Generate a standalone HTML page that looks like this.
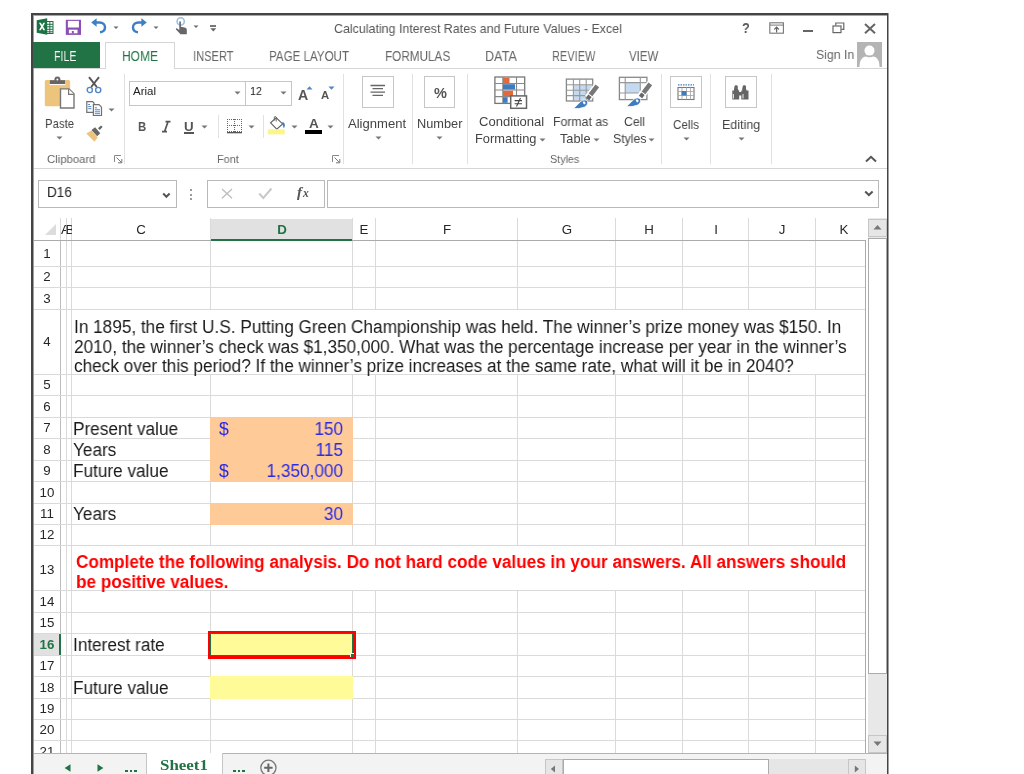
<!DOCTYPE html>
<html><head><meta charset="utf-8"><title>Excel</title>
<style>
html,body{margin:0;padding:0;width:1024px;height:774px;overflow:hidden;background:#fff;}
body{position:relative;font-family:"Liberation Sans", sans-serif;}
.t{position:absolute;white-space:nowrap;will-change:transform;}
.r{position:absolute;}
svg{position:absolute;overflow:visible;}
</style></head><body>
<div class="r" style="left:0px;top:0px;width:1024px;height:774px;background:#fff;"></div><div class="r" style="left:31px;top:13px;width:857px;height:761px;background:#fff;"></div><div class="r" style="left:31px;top:13px;width:857px;height:2px;background:#444;"></div><div class="r" style="left:31px;top:13px;width:2px;height:761px;background:#444;"></div><div class="r" style="left:887px;top:13px;width:1px;height:761px;background:#444;"></div><div class="r" style="left:888px;top:13px;width:1px;height:761px;background:#a0a0a0;"></div><div class="r" style="left:33px;top:15px;width:854px;height:1px;background:#a8a8a8;"></div><div class="r" style="left:33px;top:15px;width:1px;height:759px;background:#a0a0a0;"></div><svg style="left:36px;top:17px" width="18" height="19" viewBox="0 0 18 19">
<rect x="10.5" y="4.5" width="6.5" height="12" fill="#fff" stroke="#1e7145" stroke-width="1"/>
<path d="M11 7.3h6M11 9.8h6M11 12.3h6M11 14.8h6M13.8 5v12" stroke="#1e7145" stroke-width="1" fill="none"/>
<path d="M0.7 3.3 L11.2 1.2 L11.2 17.8 L0.7 15.8 Z" fill="#1e7145"/>
<path d="M3 5.8 L4.9 5.8 L6.1 8.1 L7.3 5.8 L9.1 5.8 L7.1 9.5 L9.2 13.3 L7.3 13.3 L6.1 10.9 L4.8 13.3 L3 13.3 L5.1 9.5 Z" fill="#fff"/>
</svg><svg style="left:65px;top:19px" width="17" height="17" viewBox="0 0 17 17">
<path d="M0.8 0.8 H16 V15.9 H0.8 Z" fill="#8c50b4"/>
<rect x="2.9" y="1.9" width="11" height="6.6" fill="#fff"/>
<rect x="3.9" y="10.7" width="8.6" height="3.6" fill="#fff"/>
<rect x="6.8" y="12" width="2" height="2.5" fill="#8c50b4"/>
</svg><svg style="left:90px;top:17px" width="18" height="17" viewBox="0 0 18 17">
<path d="M3 5.5 H9.5 C13 5.5 15 7.8 15 10.3 C15 13 13 15 10 15.3" stroke="#3e7fc1" stroke-width="2.4" fill="none"/>
<path d="M1.2 5.5 L6.6 1.2 L6.6 9.8 Z" fill="#3e7fc1"/>
</svg><svg style="left:112.8px;top:25.5px" width="6" height="4" viewBox="0 0 6 4"><path d="M0.5 0.5 L5.5 0.5 L3.0 3.0 Z" fill="#6a6a6a"/></svg><svg style="left:130px;top:17px" width="18" height="17" viewBox="0 0 18 17">
<path d="M15 5.5 H8.5 C5 5.5 3 7.8 3 10.3 C3 13 5 15 8 15.3" stroke="#3e7fc1" stroke-width="2.4" fill="none"/>
<path d="M16.8 5.5 L11.4 1.2 L11.4 9.8 Z" fill="#3e7fc1"/>
</svg><svg style="left:152.9px;top:25.5px" width="6" height="4" viewBox="0 0 6 4"><path d="M0.5 0.5 L5.5 0.5 L3.0 3.0 Z" fill="#6a6a6a"/></svg><svg style="left:174px;top:15px" width="16" height="21" viewBox="0 0 16 21">
<circle cx="6.7" cy="6.4" r="3.6" fill="none" stroke="#9cbfe3" stroke-width="1.6"/>
<path d="M5.3 7 C5.3 6.2 6.1 6.2 6.1 6.2 C6.9 6.2 6.9 7 6.9 7 V11.8 L10.5 12.5 C12 12.8 12.8 13.5 12.8 15 V19.3 H6.5 L2 14.4 C1.6 13.8 2.3 13 3 13.4 L5.3 15 Z" fill="#666"/>
</svg><svg style="left:193.4px;top:25.2px" width="6" height="4" viewBox="0 0 6 4"><path d="M0.5 0.5 L5.5 0.5 L3.0 3.0 Z" fill="#6a6a6a"/></svg><div class="r" style="left:210px;top:25px;width:6px;height:1.5px;background:#777;"></div><svg style="left:210px;top:28px" width="7" height="4" viewBox="0 0 7 4"><path d="M0.3 0.3 L6.3 0.3 L3.3 3.5 Z" fill="#666"/></svg><div class="t" style="left:333.8px;top:22.26px;font-size:13.4px;line-height:13.4px;color:#555;font-weight:normal;transform:scaleX(0.9280024746732658);transform-origin:left top;">Calculating Interest Rates and Future Values - Excel</div><div class="t" style="left:741.8px;top:21.03px;font-size:14.5px;line-height:14.5px;color:#555;font-weight:bold;transform:scaleX(0.8818541548897681);transform-origin:left top;">?</div><svg style="left:769px;top:22px" width="16" height="12" viewBox="0 0 16 12">
<rect x="0.8" y="0.8" width="13.6" height="10.4" fill="none" stroke="#777" stroke-width="1.1"/>
<path d="M1 3.1 H14.2" stroke="#777" stroke-width="1"/>
<path d="M7.6 10.5 V5.3 M5.3 7.5 L7.6 5.2 L9.9 7.5" stroke="#666" stroke-width="1.2" fill="none"/>
</svg><div class="r" style="left:803px;top:29.5px;width:10px;height:2px;background:#666;"></div><svg style="left:832px;top:22px" width="13" height="12" viewBox="0 0 13 12">
<rect x="1" y="4" width="8" height="6.6" fill="#fff" stroke="#666" stroke-width="1.2"/>
<path d="M3.8 3.5 V1 H11.8 V7.4 H9.5" fill="none" stroke="#666" stroke-width="1.2"/>
</svg><svg style="left:864px;top:23px" width="12" height="11" viewBox="0 0 12 11"><path d="M1 1 L11 10.3 M11 1 L1 10.3" stroke="#666" stroke-width="2"/></svg><div class="r" style="left:33px;top:42px;width:67px;height:26px;background:#217346;"></div><div class="t" style="left:54.3px;top:49.15px;font-size:14px;line-height:14px;color:#fff;font-weight:normal;transform:scaleX(0.7582938388625592);transform-origin:left top;">FILE</div><div class="r" style="left:34px;top:68px;width:853px;height:1px;background:#d5d5d5;"></div><div class="r" style="left:105px;top:42px;width:70px;height:27px;background:#fff;border:1px solid #d5d5d5;border-bottom:none;box-sizing:border-box;"></div><div class="t" style="left:121.8px;top:49.15px;font-size:14px;line-height:14px;color:#217346;font-weight:normal;transform:scaleX(0.8571428571428571);transform-origin:left top;">HOME</div><div class="t" style="left:192.5px;top:49.15px;font-size:14px;line-height:14px;color:#666;font-weight:normal;transform:scaleX(0.7925636007827789);transform-origin:left top;">INSERT</div><div class="t" style="left:268.75px;top:49.15px;font-size:14px;line-height:14px;color:#666;font-weight:normal;transform:scaleX(0.8269588587967749);transform-origin:left top;">PAGE LAYOUT</div><div class="t" style="left:384.8px;top:49.15px;font-size:14px;line-height:14px;color:#666;font-weight:normal;transform:scaleX(0.8383695512408385);transform-origin:left top;">FORMULAS</div><div class="t" style="left:485.0px;top:49.15px;font-size:14px;line-height:14px;color:#666;font-weight:normal;transform:scaleX(0.9013605442176871);transform-origin:left top;">DATA</div><div class="t" style="left:551.6px;top:49.15px;font-size:14px;line-height:14px;color:#666;font-weight:normal;transform:scaleX(0.7858048162230672);transform-origin:left top;">REVIEW</div><div class="t" style="left:628.9px;top:49.15px;font-size:14px;line-height:14px;color:#666;font-weight:normal;transform:scaleX(0.8191221694157115);transform-origin:left top;">VIEW</div><div class="t" style="left:815.5px;top:47.57px;font-size:13.5px;line-height:13.5px;color:#666;font-weight:normal;transform:scaleX(0.9107663040247309);transform-origin:left top;">Sign In</div><svg style="left:857px;top:42px" width="25" height="26" viewBox="0 0 25 26">
<rect x="0" y="0" width="25" height="25" fill="#b4b4b4"/>
<circle cx="12.5" cy="8.6" r="5" fill="#fff"/>
<path d="M2.5 25 C2.5 17.5 6 14.6 9 14.6 C10.5 15.6 14.5 15.6 16 14.6 C19 14.6 22.5 17.5 22.5 25 Z" fill="#fff"/>
</svg><div class="r" style="left:34px;top:168px;width:853px;height:1px;background:#d5d5d5;"></div><svg style="left:43px;top:75px" width="34" height="35" viewBox="0 0 34 35">
<rect x="1.8" y="4.9" width="25.3" height="26.3" rx="1.5" fill="#edc47b"/>
<rect x="6.9" y="5.2" width="15.1" height="3.8" fill="#666"/>
<circle cx="14.4" cy="4.5" r="3" fill="#666"/><circle cx="14.4" cy="4.6" r="1" fill="#fff"/>
<path d="M6.5 9.6 H22.5" stroke="#fff" stroke-width="1"/>
<path d="M17.5 13.9 H26 L31 18.9 V33 H17.5 Z" fill="#fff" stroke="#777" stroke-width="1.4"/>
<path d="M25.6 14 V19.3 H31" fill="#fff" stroke="#777" stroke-width="1.2"/>
</svg><div class="t" style="left:45.3px;top:116.70px;font-size:13px;line-height:13px;color:#444;font-weight:normal;transform:scaleX(0.8730995032364894);transform-origin:left top;">Paste</div><svg style="left:56.4px;top:136px" width="7" height="4" viewBox="0 0 7 4"><path d="M0.5 0.5 L6.5 0.5 L3.5 3.5 Z" fill="#777"/></svg><svg style="left:86px;top:76px" width="16" height="18" viewBox="0 0 16 18">
<path d="M3 1.2 L10.8 11 M13 1.2 L5.2 11" stroke="#555" stroke-width="1.9"/>
<circle cx="3.8" cy="14" r="2.6" fill="none" stroke="#4f86c6" stroke-width="1.4"/>
<circle cx="12.2" cy="14" r="2.6" fill="none" stroke="#4f86c6" stroke-width="1.4"/>
</svg><svg style="left:85px;top:100px" width="18" height="17" viewBox="0 0 18 17">
<path d="M1.8 1.6 H7.6 L9 3 V12.4 H1.8 Z" fill="#fff" stroke="#707070" stroke-width="1.2"/>
<path d="M3.2 4.5 H5 M3.2 6.6 H6.4 M3.2 8.7 H6.4" stroke="#4f86c6" stroke-width="1"/>
<path d="M8.4 4.7 H14 L16.5 7.2 V15.5 H8.4 Z" fill="#fff" stroke="#707070" stroke-width="1.2"/>
<path d="M9.8 7.8 H12 M9.8 9.8 H15 M9.8 11.8 H15 M9.8 13.7 H15" stroke="#4f86c6" stroke-width="1"/>
</svg><svg style="left:107.9px;top:107.5px" width="7" height="4" viewBox="0 0 7 4"><path d="M0.5 0.5 L6.5 0.5 L3.5 3.5 Z" fill="#777"/></svg><svg style="left:85px;top:125px" width="19" height="18" viewBox="0 0 19 18">
<path d="M1.3 8.6 L6.6 5.6 L12.7 12.4 L9.5 16.8 Z" fill="#edc47b"/>
<path d="M6.5 4.9 L10.1 2.3 L15.3 8.3 L12.2 11.3 Z" fill="#666"/>
<path d="M13 3.2 L15.7 0.8 C16.6 0.3 17.7 1.2 17.3 2.2 L14.8 5.1 Z" fill="#666"/>
</svg><div class="t" style="left:47.2px;top:153.57px;font-size:11.5px;line-height:11.5px;color:#666;font-weight:normal;transform:scaleX(0.9853718000812678);transform-origin:left top;">Clipboard</div><svg style="left:113.6px;top:154.5px" width="9" height="9" viewBox="0 0 9 9"><path d="M0.5 0.5 H7 M0.5 0.5 V7" stroke="#888" stroke-width="1" fill="none"/><path d="M2.5 2.5 L7.5 7.5 M7.8 4 V7.8 H4" stroke="#777" stroke-width="1" fill="none"/></svg><div class="r" style="left:124px;top:74px;width:1px;height:90px;background:#e1e1e1;"></div><div class="r" style="left:129px;top:81px;width:117px;height:25px;background:#fff;border:1px solid #c6c6c6;box-sizing:border-box;"></div><div class="t" style="left:133.2px;top:86.07px;font-size:11.5px;line-height:11.5px;color:#222;font-weight:normal;transform:scaleX(0.9956521739130434);transform-origin:left top;">Arial</div><svg style="left:233.7px;top:91px" width="7" height="4" viewBox="0 0 7 4"><path d="M0.5 0.5 L6.5 0.5 L3.5 3.5 Z" fill="#777"/></svg><div class="r" style="left:245px;top:81px;width:47px;height:25px;background:#fff;border:1px solid #c6c6c6;box-sizing:border-box;"></div><div class="t" style="left:249.5px;top:86.07px;font-size:11.5px;line-height:11.5px;color:#222;font-weight:normal;transform:scaleX(0.9244026635330983);transform-origin:left top;">12</div><svg style="left:279.8px;top:91px" width="7" height="4" viewBox="0 0 7 4"><path d="M0.5 0.5 L6.5 0.5 L3.5 3.5 Z" fill="#777"/></svg><div class="t" style="left:297.8px;top:88.15px;font-size:14px;line-height:14px;color:#555;font-weight:bold;transform:scaleX(1.0119047619047619);transform-origin:left top;">A</div><svg style="left:306px;top:86px" width="7" height="4" viewBox="0 0 7 4"><path d="M0.5 3.5 L3.5 0.3 L6.5 3.5 Z" fill="#4f86c6"/></svg><div class="t" style="left:321.0px;top:90.43px;font-size:11.3px;line-height:11.3px;color:#555;font-weight:bold;transform:scaleX(0.9832841691248769);transform-origin:left top;">A</div><svg style="left:328px;top:86px" width="7" height="4" viewBox="0 0 7 4"><path d="M0.5 0.5 L6.5 0.5 L3.5 3.7 Z" fill="#4f86c6"/></svg><div class="t" style="left:137.9px;top:120.33px;font-size:13.2px;line-height:13.2px;color:#555;font-weight:bold;transform:scaleX(0.8522727272727273);transform-origin:left top;">B</div><svg style="left:161px;top:121px" width="10" height="12" viewBox="0 0 10 12"><path d="M4.5 0.7 H9.5 M1 10.7 H6 M7 0.7 L3.5 10.7" stroke="#555" stroke-width="1.7" fill="none"/></svg><div class="t" style="left:184.0px;top:120.33px;font-size:13.2px;line-height:13.2px;color:#555;font-weight:bold;transform:scaleX(1.0101010101010102);transform-origin:left top;">U</div><div class="r" style="left:184px;top:132px;width:10px;height:1.5px;background:#555;"></div><svg style="left:201.2px;top:125px" width="7" height="4" viewBox="0 0 7 4"><path d="M0.5 0.5 L6.5 0.5 L3.5 3.5 Z" fill="#777"/></svg><div class="r" style="left:218px;top:115px;width:1px;height:23px;background:#e1e1e1;"></div><svg style="left:226px;top:118px" width="17" height="17" viewBox="0 0 17 17"><rect x="1" y="1" width="1" height="1" fill="#666"/><rect x="3" y="1" width="1" height="1" fill="#666"/><rect x="5" y="1" width="1" height="1" fill="#666"/><rect x="7" y="1" width="1" height="1" fill="#666"/><rect x="9" y="1" width="1" height="1" fill="#666"/><rect x="11" y="1" width="1" height="1" fill="#666"/><rect x="13" y="1" width="1" height="1" fill="#666"/><rect x="15" y="1" width="1" height="1" fill="#666"/><rect x="1" y="7" width="1" height="1" fill="#666"/><rect x="3" y="7" width="1" height="1" fill="#666"/><rect x="5" y="7" width="1" height="1" fill="#666"/><rect x="7" y="7" width="1" height="1" fill="#666"/><rect x="9" y="7" width="1" height="1" fill="#666"/><rect x="11" y="7" width="1" height="1" fill="#666"/><rect x="13" y="7" width="1" height="1" fill="#666"/><rect x="15" y="7" width="1" height="1" fill="#666"/><rect x="1" y="13" width="1" height="1" fill="#666"/><rect x="3" y="13" width="1" height="1" fill="#666"/><rect x="5" y="13" width="1" height="1" fill="#666"/><rect x="7" y="13" width="1" height="1" fill="#666"/><rect x="9" y="13" width="1" height="1" fill="#666"/><rect x="11" y="13" width="1" height="1" fill="#666"/><rect x="13" y="13" width="1" height="1" fill="#666"/><rect x="15" y="13" width="1" height="1" fill="#666"/><rect x="1" y="1" width="1" height="1" fill="#666"/><rect x="1" y="3" width="1" height="1" fill="#666"/><rect x="1" y="5" width="1" height="1" fill="#666"/><rect x="1" y="7" width="1" height="1" fill="#666"/><rect x="1" y="9" width="1" height="1" fill="#666"/><rect x="1" y="11" width="1" height="1" fill="#666"/><rect x="1" y="13" width="1" height="1" fill="#666"/><rect x="8" y="1" width="1" height="1" fill="#666"/><rect x="8" y="3" width="1" height="1" fill="#666"/><rect x="8" y="5" width="1" height="1" fill="#666"/><rect x="8" y="7" width="1" height="1" fill="#666"/><rect x="8" y="9" width="1" height="1" fill="#666"/><rect x="8" y="11" width="1" height="1" fill="#666"/><rect x="8" y="13" width="1" height="1" fill="#666"/><rect x="15" y="1" width="1" height="1" fill="#666"/><rect x="15" y="3" width="1" height="1" fill="#666"/><rect x="15" y="5" width="1" height="1" fill="#666"/><rect x="15" y="7" width="1" height="1" fill="#666"/><rect x="15" y="9" width="1" height="1" fill="#666"/><rect x="15" y="11" width="1" height="1" fill="#666"/><rect x="15" y="13" width="1" height="1" fill="#666"/><rect x="1" y="14" width="15" height="1.3" fill="#555"/></svg><svg style="left:247.8px;top:124.7px" width="7" height="4" viewBox="0 0 7 4"><path d="M0.5 0.5 L6.5 0.5 L3.5 3.5 Z" fill="#777"/></svg><div class="r" style="left:263px;top:115px;width:1px;height:23px;background:#e1e1e1;"></div><svg style="left:267px;top:116px" width="20" height="20" viewBox="0 0 20 20">
<path d="M3.6 6.8 L9.3 1.8 L15.6 7.9 L9.8 13.2 Z" fill="#fff" stroke="#666" stroke-width="1.2"/>
<path d="M7.3 4.5 V1.2 C7.3 0.3 9.2 0.3 9.2 1.2 V5.5" stroke="#666" stroke-width="1" fill="none"/>
<path d="M15.2 5.8 C18.2 6.8 18.6 9.8 16.8 12.3 C16.2 11 15.8 9 15.2 5.8 Z" fill="#3f7fc1"/>
<rect x="0.8" y="13.4" width="17" height="5" fill="#fbf68c"/>
</svg><svg style="left:290.6px;top:124.7px" width="7" height="4" viewBox="0 0 7 4"><path d="M0.5 0.5 L6.5 0.5 L3.5 3.5 Z" fill="#777"/></svg><div class="t" style="left:309.0px;top:117.17px;font-size:13.5px;line-height:13.5px;color:#555;font-weight:bold;transform:scaleX(0.9670781893004115);transform-origin:left top;">A</div><div class="r" style="left:304.6px;top:130.2px;width:17px;height:4.2px;background:#000;"></div><svg style="left:326.9px;top:124.7px" width="7" height="4" viewBox="0 0 7 4"><path d="M0.5 0.5 L6.5 0.5 L3.5 3.5 Z" fill="#777"/></svg><div class="t" style="left:216.6px;top:153.77px;font-size:11.5px;line-height:11.5px;color:#666;font-weight:normal;transform:scaleX(0.9478260869565218);transform-origin:left top;">Font</div><svg style="left:332px;top:155px" width="9" height="9" viewBox="0 0 9 9"><path d="M0.5 0.5 H7 M0.5 0.5 V7" stroke="#888" stroke-width="1" fill="none"/><path d="M2.5 2.5 L7.5 7.5 M7.8 4 V7.8 H4" stroke="#777" stroke-width="1" fill="none"/></svg><div class="r" style="left:343px;top:74px;width:1px;height:90px;background:#e1e1e1;"></div><div class="r" style="left:362px;top:76px;width:32px;height:32px;background:#fff;border:1px solid #c6c6c6;box-sizing:border-box;"></div><svg style="left:369px;top:84px" width="18" height="13" viewBox="0 0 18 13"><path d="M1.5 1.5 H16 M3.5 4.7 H14 M1.5 8.1 H16 M3.5 11.4 H14" stroke="#666" stroke-width="1.3"/></svg><div class="t" style="left:348.4px;top:118.05px;font-size:12.7px;line-height:12.7px;color:#444;font-weight:normal;transform:scaleX(1.0292020584041168);transform-origin:left top;">Alignment</div><svg style="left:374.5px;top:136.2px" width="7" height="4" viewBox="0 0 7 4"><path d="M0.5 0.5 L6.5 0.5 L3.5 3.5 Z" fill="#777"/></svg><div class="r" style="left:412px;top:74px;width:1px;height:90px;background:#e1e1e1;"></div><div class="r" style="left:424px;top:76px;width:31px;height:32px;background:#fff;border:1px solid #c6c6c6;box-sizing:border-box;"></div><div class="t" style="left:433.7px;top:85.53px;font-size:14.5px;line-height:14.5px;color:#555;font-weight:bold;transform:scaleX(0.999612553273925);transform-origin:left top;">%</div><div class="t" style="left:417.3px;top:118.05px;font-size:12.7px;line-height:12.7px;color:#444;font-weight:normal;transform:scaleX(1.0055705062183684);transform-origin:left top;">Number</div><svg style="left:436.0px;top:136.2px" width="7" height="4" viewBox="0 0 7 4"><path d="M0.5 0.5 L6.5 0.5 L3.5 3.5 Z" fill="#777"/></svg><div class="r" style="left:467px;top:74px;width:1px;height:90px;background:#e1e1e1;"></div><svg style="left:493px;top:75px" width="36" height="36" viewBox="0 0 36 36">
<rect x="1.9" y="2" width="29.8" height="26.4" fill="#fff" stroke="#777" stroke-width="1.3"/>
<path d="M9.8 2 V28.4 M23.5 2 V28.4 M1.9 8.5 H31.7 M1.9 15 H31.7 M1.9 21.6 H31.7" stroke="#888" stroke-width="1.1"/>
<rect x="10" y="2.7" width="6.5" height="5.3" fill="#e06a3c"/>
<rect x="10" y="9.2" width="12" height="5.3" fill="#3f7cbf"/>
<rect x="10" y="15.7" width="10" height="5.3" fill="#e06a3c"/>
<rect x="10" y="22.2" width="4.6" height="5.6" fill="#3f7cbf"/>
<rect x="17.7" y="20.9" width="15.8" height="12.4" fill="#fff" stroke="#666" stroke-width="1.5"/>
<path d="M21.6 25.6 H29 M21.6 28.8 H29 M27.5 23 L23.5 31.5" stroke="#444" stroke-width="1.1"/>
</svg><div class="t" style="left:478.7px;top:116.25px;font-size:12.7px;line-height:12.7px;color:#444;font-weight:normal;transform:scaleX(1.027319137555358);transform-origin:left top;">Conditional</div><div class="t" style="left:474.8px;top:133.05px;font-size:12.7px;line-height:12.7px;color:#444;font-weight:normal;transform:scaleX(1.0130794320166048);transform-origin:left top;">Formatting</div><svg style="left:539.0px;top:137.5px" width="7" height="4" viewBox="0 0 7 4"><path d="M0.5 0.5 L6.5 0.5 L3.5 3.5 Z" fill="#777"/></svg><svg style="left:565px;top:78px" width="35" height="32" viewBox="0 0 35 32">
<path d="M8.4 6.7 H27.4 V22 H8.4 Z" fill="#c5d9f1"/>
<rect x="1.4" y="1.1" width="26.3" height="21.9" fill="none" stroke="#888" stroke-width="1.3"/>
<path d="M8.4 1.1 V23 M14.7 1.1 V23 M21.2 1.1 V23 M1.4 6.7 H27.7 M1.4 12.3 H27.7 M1.4 17.6 H27.7" stroke="#999" stroke-width="1.1"/>
<path d="M32.5 7.5 L23 20" stroke="#fff" stroke-width="7.5"/>
<path d="M32.3 7.8 L25.5 16.8" stroke="#777" stroke-width="4.6"/>
<path d="M25 17.8 L22.5 21" stroke="#666" stroke-width="4.2"/>
<path d="M8.5 30.6 L16 23.2 C18 21.4 21.8 21.5 22.6 23.6 C23.3 25.6 21.5 28.2 19.3 29.2 L14 30.6 Z" fill="#3f7cbf" stroke="#fff" stroke-width="0.8"/>
<path d="M17.6 23.8 C18.8 23 20.6 23.4 20.6 25 C20.3 26.3 19.3 26.5 18.6 26 Z" fill="#fff"/>
</svg><div class="t" style="left:553.3px;top:116.25px;font-size:12.7px;line-height:12.7px;color:#444;font-weight:normal;transform:scaleX(0.9676290463692038);transform-origin:left top;">Format as</div><div class="t" style="left:560.0px;top:133.05px;font-size:12.7px;line-height:12.7px;color:#444;font-weight:normal;transform:scaleX(1.0048430138701283);transform-origin:left top;">Table</div><svg style="left:593.0px;top:137.5px" width="7" height="4" viewBox="0 0 7 4"><path d="M0.5 0.5 L6.5 0.5 L3.5 3.5 Z" fill="#777"/></svg><svg style="left:618px;top:76px" width="35" height="32" viewBox="0 0 35 32">
<path d="M7.2 6.6 H22.3 V17 H7.2 Z" fill="#c5d9f1"/>
<rect x="1.4" y="1.3" width="27.5" height="22.3" fill="none" stroke="#888" stroke-width="1.3"/>
<path d="M7.2 1.3 V23.6 M22.3 1.3 V17 M1.4 6.6 H28.9 M1.4 17 H22.3" stroke="#999" stroke-width="1.1"/>
<path d="M32.5 7.5 L23 20" stroke="#fff" stroke-width="7.5"/>
<path d="M32.3 7.8 L25.5 16.8" stroke="#777" stroke-width="4.6"/>
<path d="M25 17.8 L22.5 21" stroke="#666" stroke-width="4.2"/>
<path d="M8.5 30.6 L16 23.2 C18 21.4 21.8 21.5 22.6 23.6 C23.3 25.6 21.5 28.2 19.3 29.2 L14 30.6 Z" fill="#3f7cbf" stroke="#fff" stroke-width="0.8"/>
<path d="M17.6 23.8 C18.8 23 20.6 23.4 20.6 25 C20.3 26.3 19.3 26.5 18.6 26 Z" fill="#fff"/>
</svg><div class="t" style="left:623.6px;top:116.25px;font-size:12.7px;line-height:12.7px;color:#444;font-weight:normal;transform:scaleX(0.9631404770055918);transform-origin:left top;">Cell</div><div class="t" style="left:612.5px;top:133.05px;font-size:12.7px;line-height:12.7px;color:#444;font-weight:normal;transform:scaleX(0.9679982662717619);transform-origin:left top;">Styles</div><svg style="left:647.5px;top:137.5px" width="7" height="4" viewBox="0 0 7 4"><path d="M0.5 0.5 L6.5 0.5 L3.5 3.5 Z" fill="#777"/></svg><div class="t" style="left:550.0px;top:154.44px;font-size:11px;line-height:11px;color:#666;font-weight:normal;transform:scaleX(0.9774812343619683);transform-origin:left top;">Styles</div><div class="r" style="left:661px;top:74px;width:1px;height:90px;background:#e1e1e1;"></div><div class="r" style="left:670px;top:76px;width:32px;height:32px;background:#fff;border:1px solid #c6c6c6;box-sizing:border-box;"></div><svg style="left:676px;top:83px" width="20" height="18" viewBox="0 0 20 18">
<path d="M2 1.8 H18" stroke="#3f7cbf" stroke-width="1.2" stroke-dasharray="1.5 1"/>
<rect x="2" y="4.5" width="16" height="12" fill="#fff" stroke="#777" stroke-width="1.1"/>
<path d="M2 8.5 H18 M2 12.5 H18 M6 4.5 V16.5 M10.5 4.5 V16.5 M14.5 4.5 V16.5" stroke="#aaa" stroke-width="0.9"/>
<rect x="5.5" y="8" width="5" height="4.5" fill="#3f7cbf"/>
</svg><div class="t" style="left:672.7px;top:117.63px;font-size:13.2px;line-height:13.2px;color:#444;font-weight:normal;transform:scaleX(0.8852570650323459);transform-origin:left top;">Cells</div><svg style="left:682.5px;top:136.5px" width="7" height="4" viewBox="0 0 7 4"><path d="M0.5 0.5 L6.5 0.5 L3.5 3.5 Z" fill="#777"/></svg><div class="r" style="left:710px;top:74px;width:1px;height:90px;background:#e1e1e1;"></div><div class="r" style="left:725px;top:76px;width:32px;height:32px;background:#fff;border:1px solid #c6c6c6;box-sizing:border-box;"></div><svg style="left:731px;top:84px" width="19" height="17" viewBox="0 0 19 17">
<path d="M3.5 2.5 C3.5 0.8 6.8 0.8 6.8 2.5 V5 L7.5 6 V8 H3 V5 Z" fill="#666"/>
<path d="M11.7 2.5 C11.7 0.8 15 0.8 15 2.5 V5 L15.5 6 V8 H11.2 V5 Z" fill="#666"/>
<path d="M1.3 6.5 H8.2 V15.5 H1.3 Z M10.3 6.5 H17.5 V15.5 H10.3 Z M7.5 8 H11 V11.5 H7.5 Z" fill="#666"/>
<path d="M2.4 10 V14.5 M12 10 V14.5" stroke="#fff" stroke-width="0.9"/>
</svg><div class="t" style="left:721.5px;top:117.63px;font-size:13.2px;line-height:13.2px;color:#444;font-weight:normal;transform:scaleX(0.9457318280847694);transform-origin:left top;">Editing</div><svg style="left:737.5px;top:136.5px" width="7" height="4" viewBox="0 0 7 4"><path d="M0.5 0.5 L6.5 0.5 L3.5 3.5 Z" fill="#777"/></svg><div class="r" style="left:771px;top:74px;width:1px;height:90px;background:#e1e1e1;"></div><svg style="left:865px;top:155px" width="12" height="8" viewBox="0 0 12 8"><path d="M1 6.5 L6 1.8 L11 6.5" stroke="#555" stroke-width="2" fill="none"/></svg><div class="r" style="left:38px;top:180px;width:139px;height:28px;background:#fff;border:1px solid #b9b9b9;box-sizing:border-box;"></div><div class="t" style="left:46.5px;top:185.15px;font-size:14px;line-height:14px;color:#222;font-weight:normal;transform:scaleX(0.9653561697158427);transform-origin:left top;">D16</div><svg style="left:162px;top:192px" width="9" height="7" viewBox="0 0 9 7"><path d="M1.2 1.5 L4.4 4.8 L7.6 1.5" stroke="#555" stroke-width="2" fill="none"/></svg><div class="r" style="left:190px;top:189px;width:2px;height:2px;background:#9a9a9a;"></div><div class="r" style="left:190px;top:193.5px;width:2px;height:2px;background:#9a9a9a;"></div><div class="r" style="left:190px;top:198px;width:2px;height:2px;background:#9a9a9a;"></div><div class="r" style="left:207px;top:180px;width:118px;height:28px;background:#fff;border:1px solid #b9b9b9;box-sizing:border-box;"></div><svg style="left:221px;top:188px" width="12" height="11" viewBox="0 0 12 11"><path d="M1 1 L11 10.3 M11 1 L1 10.3" stroke="#bdbdbd" stroke-width="1.3"/></svg><svg style="left:258px;top:187px" width="15" height="13" viewBox="0 0 15 13"><path d="M1.2 6.5 L5.3 11 L13.5 1.5" stroke="#c8c8c8" stroke-width="2" fill="none"/></svg><div class="t" style="left:297px;top:184.80px;font-size:15px;line-height:15px;color:#555;font-weight:bold;font-family:'Liberation Serif',serif;font-style:italic;">f</div><div class="t" style="left:303.2px;top:187.77px;font-size:11.5px;line-height:11.5px;color:#555;font-weight:bold;font-family:'Liberation Serif',serif;font-style:italic;">x</div><div class="r" style="left:327px;top:180px;width:552px;height:28px;background:#fff;border:1px solid #b9b9b9;box-sizing:border-box;"></div><svg style="left:864px;top:190px" width="10" height="7" viewBox="0 0 10 7"><path d="M1.2 1.5 L4.9 5 L8.6 1.5" stroke="#555" stroke-width="2" fill="none"/></svg><div class="r" style="left:60px;top:218px;width:1px;height:535px;background:#dadada;"></div><div class="r" style="left:66px;top:218px;width:1px;height:535px;background:#dadada;"></div><div class="r" style="left:71px;top:218px;width:1px;height:535px;background:#dadada;"></div><div class="r" style="left:210px;top:218px;width:1px;height:535px;background:#dadada;"></div><div class="r" style="left:352px;top:218px;width:1px;height:535px;background:#dadada;"></div><div class="r" style="left:375px;top:218px;width:1px;height:535px;background:#dadada;"></div><div class="r" style="left:517px;top:218px;width:1px;height:535px;background:#dadada;"></div><div class="r" style="left:615px;top:218px;width:1px;height:535px;background:#dadada;"></div><div class="r" style="left:682px;top:218px;width:1px;height:535px;background:#dadada;"></div><div class="r" style="left:748px;top:218px;width:1px;height:535px;background:#dadada;"></div><div class="r" style="left:815px;top:218px;width:1px;height:535px;background:#dadada;"></div><div class="r" style="left:60px;top:240px;width:1px;height:513px;background:#bdbdbd;"></div><div class="r" style="left:34px;top:240px;width:832px;height:1px;background:#ababab;"></div><div class="r" style="left:34px;top:266px;width:832px;height:1px;background:#dadada;"></div><div class="r" style="left:34px;top:287px;width:832px;height:1px;background:#dadada;"></div><div class="r" style="left:34px;top:309px;width:832px;height:1px;background:#dadada;"></div><div class="r" style="left:34px;top:374px;width:832px;height:1px;background:#dadada;"></div><div class="r" style="left:34px;top:395px;width:832px;height:1px;background:#dadada;"></div><div class="r" style="left:34px;top:417px;width:832px;height:1px;background:#dadada;"></div><div class="r" style="left:34px;top:438px;width:832px;height:1px;background:#dadada;"></div><div class="r" style="left:34px;top:460px;width:832px;height:1px;background:#dadada;"></div><div class="r" style="left:34px;top:481px;width:832px;height:1px;background:#dadada;"></div><div class="r" style="left:34px;top:503px;width:832px;height:1px;background:#dadada;"></div><div class="r" style="left:34px;top:524px;width:832px;height:1px;background:#dadada;"></div><div class="r" style="left:34px;top:545px;width:832px;height:1px;background:#dadada;"></div><div class="r" style="left:34px;top:590px;width:832px;height:1px;background:#dadada;"></div><div class="r" style="left:34px;top:612px;width:832px;height:1px;background:#dadada;"></div><div class="r" style="left:34px;top:633px;width:832px;height:1px;background:#dadada;"></div><div class="r" style="left:34px;top:655px;width:832px;height:1px;background:#dadada;"></div><div class="r" style="left:34px;top:676px;width:832px;height:1px;background:#dadada;"></div><div class="r" style="left:34px;top:698px;width:832px;height:1px;background:#dadada;"></div><div class="r" style="left:34px;top:719px;width:832px;height:1px;background:#dadada;"></div><div class="r" style="left:34px;top:740px;width:832px;height:1px;background:#dadada;"></div><div class="r" style="left:865px;top:240px;width:1px;height:513px;background:#ababab;"></div><div class="r" style="left:72px;top:310px;width:793px;height:64px;background:#fff;"></div><div class="r" style="left:72px;top:546px;width:793px;height:44px;background:#fff;"></div><div class="r" style="left:211px;top:219px;width:141px;height:20px;background:#e1e1e1;"></div><div class="r" style="left:211px;top:239px;width:141px;height:2px;background:#217346;"></div><div class="r" style="left:34px;top:634px;width:25px;height:21px;background:#e1e1e1;"></div><div class="r" style="left:59px;top:634px;width:2px;height:21px;background:#217346;"></div><div class="t" style="left:121.0px;width:40px;text-align:center;top:222.74px;font-size:13.3px;line-height:13.3px;color:#262626;font-weight:normal;">C</div><div class="t" style="left:344.0px;width:40px;text-align:center;top:222.74px;font-size:13.3px;line-height:13.3px;color:#262626;font-weight:normal;">E</div><div class="t" style="left:426.5px;width:40px;text-align:center;top:222.74px;font-size:13.3px;line-height:13.3px;color:#262626;font-weight:normal;">F</div><div class="t" style="left:546.5px;width:40px;text-align:center;top:222.74px;font-size:13.3px;line-height:13.3px;color:#262626;font-weight:normal;">G</div><div class="t" style="left:629.0px;width:40px;text-align:center;top:222.74px;font-size:13.3px;line-height:13.3px;color:#262626;font-weight:normal;">H</div><div class="t" style="left:695.5px;width:40px;text-align:center;top:222.74px;font-size:13.3px;line-height:13.3px;color:#262626;font-weight:normal;">I</div><div class="t" style="left:762.0px;width:40px;text-align:center;top:222.74px;font-size:13.3px;line-height:13.3px;color:#262626;font-weight:normal;">J</div><div class="t" style="left:823.5px;width:40px;text-align:center;top:222.74px;font-size:13.3px;line-height:13.3px;color:#262626;font-weight:normal;">K</div><div class="t" style="left:262.0px;width:40px;text-align:center;top:222.74px;font-size:13.3px;line-height:13.3px;color:#217346;font-weight:bold;">D</div><div class="t" style="left:61px;top:222.74px;width:5px;overflow:hidden;font-size:13.3px;line-height:13.3px;color:#262626;"><span style="margin-left:0px">A</span></div><div class="t" style="left:66px;top:222.74px;width:6px;overflow:hidden;font-size:13.3px;line-height:13.3px;color:#262626;"><span style="margin-left:-0.5px">B</span></div><svg style="left:44px;top:224px" width="12" height="12"><path d="M12 0 L12 11 L1 11 Z" fill="#dcdcdc"/></svg><div class="t" style="left:32.0px;width:30px;text-align:center;top:246.54px;font-size:13.3px;line-height:13.3px;color:#262626;font-weight:normal;">1</div><div class="t" style="left:32.0px;width:30px;text-align:center;top:270.04px;font-size:13.3px;line-height:13.3px;color:#262626;font-weight:normal;">2</div><div class="t" style="left:32.0px;width:30px;text-align:center;top:291.54px;font-size:13.3px;line-height:13.3px;color:#262626;font-weight:normal;">3</div><div class="t" style="left:32.0px;width:30px;text-align:center;top:335.04px;font-size:13.3px;line-height:13.3px;color:#262626;font-weight:normal;">4</div><div class="t" style="left:32.0px;width:30px;text-align:center;top:378.04px;font-size:13.3px;line-height:13.3px;color:#262626;font-weight:normal;">5</div><div class="t" style="left:32.0px;width:30px;text-align:center;top:399.54px;font-size:13.3px;line-height:13.3px;color:#262626;font-weight:normal;">6</div><div class="t" style="left:32.0px;width:30px;text-align:center;top:421.04px;font-size:13.3px;line-height:13.3px;color:#262626;font-weight:normal;">7</div><div class="t" style="left:32.0px;width:30px;text-align:center;top:442.54px;font-size:13.3px;line-height:13.3px;color:#262626;font-weight:normal;">8</div><div class="t" style="left:32.0px;width:30px;text-align:center;top:464.04px;font-size:13.3px;line-height:13.3px;color:#262626;font-weight:normal;">9</div><div class="t" style="left:32.0px;width:30px;text-align:center;top:485.54px;font-size:13.3px;line-height:13.3px;color:#262626;font-weight:normal;">10</div><div class="t" style="left:32.0px;width:30px;text-align:center;top:507.04px;font-size:13.3px;line-height:13.3px;color:#262626;font-weight:normal;">11</div><div class="t" style="left:32.0px;width:30px;text-align:center;top:528.04px;font-size:13.3px;line-height:13.3px;color:#262626;font-weight:normal;">12</div><div class="t" style="left:32.0px;width:30px;text-align:center;top:562.54px;font-size:13.3px;line-height:13.3px;color:#262626;font-weight:normal;">13</div><div class="t" style="left:32.0px;width:30px;text-align:center;top:594.54px;font-size:13.3px;line-height:13.3px;color:#262626;font-weight:normal;">14</div><div class="t" style="left:32.0px;width:30px;text-align:center;top:616.04px;font-size:13.3px;line-height:13.3px;color:#262626;font-weight:normal;">15</div><div class="t" style="left:32.0px;width:30px;text-align:center;top:637.54px;font-size:13.3px;line-height:13.3px;color:#217346;font-weight:bold;">16</div><div class="t" style="left:32.0px;width:30px;text-align:center;top:659.04px;font-size:13.3px;line-height:13.3px;color:#262626;font-weight:normal;">17</div><div class="t" style="left:32.0px;width:30px;text-align:center;top:680.54px;font-size:13.3px;line-height:13.3px;color:#262626;font-weight:normal;">18</div><div class="t" style="left:32.0px;width:30px;text-align:center;top:702.04px;font-size:13.3px;line-height:13.3px;color:#262626;font-weight:normal;">19</div><div class="t" style="left:32.0px;width:30px;text-align:center;top:723.04px;font-size:13.3px;line-height:13.3px;color:#262626;font-weight:normal;">20</div><div class="t" style="left:32.0px;width:30px;text-align:center;top:745.21px;font-size:13.3px;line-height:13.3px;color:#262626;font-weight:normal;">21</div><div class="t" style="left:73.8px;top:319.10px;font-size:17.6px;line-height:17.6px;color:#1a1a1a;font-weight:normal;transform:scaleX(0.977);transform-origin:left top;">In 1895, the first U.S. Putting Green Championship was held. The winner’s prize money was $150. In</div><div class="t" style="left:73.8px;top:338.70px;font-size:17.6px;line-height:17.6px;color:#1a1a1a;font-weight:normal;transform:scaleX(0.977);transform-origin:left top;">2010, the winner’s check was $1,350,000. What was the percentage increase per year in the winner’s</div><div class="t" style="left:73.8px;top:357.70px;font-size:17.6px;line-height:17.6px;color:#1a1a1a;font-weight:normal;transform:scaleX(0.977);transform-origin:left top;">check over this period? If the winner’s prize increases at the same rate, what will it be in 2040?</div><div class="r" style="left:210px;top:417px;width:143px;height:65px;background:#fdca98;"></div><div class="r" style="left:210px;top:503px;width:143px;height:22px;background:#fdca98;"></div><div class="r" style="left:210px;top:676px;width:143px;height:23px;background:#fffb98;"></div><div class="t" style="left:72.5px;top:420.50px;font-size:17.6px;line-height:17.6px;color:#1a1a1a;font-weight:normal;transform:scaleX(0.977);transform-origin:left top;">Present value</div><div class="t" style="left:72.5px;top:441.80px;font-size:17.6px;line-height:17.6px;color:#1a1a1a;font-weight:normal;transform:scaleX(0.977);transform-origin:left top;">Years</div><div class="t" style="left:72.5px;top:463.10px;font-size:17.6px;line-height:17.6px;color:#1a1a1a;font-weight:normal;transform:scaleX(0.977);transform-origin:left top;">Future value</div><div class="t" style="left:72.5px;top:505.80px;font-size:17.6px;line-height:17.6px;color:#1a1a1a;font-weight:normal;transform:scaleX(0.977);transform-origin:left top;">Years</div><div class="t" style="left:72.5px;top:636.80px;font-size:17.6px;line-height:17.6px;color:#1a1a1a;font-weight:normal;transform:scaleX(0.977);transform-origin:left top;">Interest rate</div><div class="t" style="left:72.5px;top:679.80px;font-size:17.6px;line-height:17.6px;color:#1a1a1a;font-weight:normal;transform:scaleX(0.977);transform-origin:left top;">Future value</div><div class="t" style="left:219px;top:420.50px;font-size:17.6px;line-height:17.6px;color:#2a2ae6;font-weight:normal;transform:scaleX(0.977);transform-origin:left top;">$</div><div class="t" style="left:219px;top:463.10px;font-size:17.6px;line-height:17.6px;color:#2a2ae6;font-weight:normal;transform:scaleX(0.977);transform-origin:left top;">$</div><div class="t" style="left:222.5px;width:120px;text-align:right;top:420.50px;font-size:17.6px;line-height:17.6px;color:#2a2ae6;font-weight:normal;transform:scaleX(0.977);transform-origin:right top;">150</div><div class="t" style="left:222.5px;width:120px;text-align:right;top:441.80px;font-size:17.6px;line-height:17.6px;color:#2a2ae6;font-weight:normal;transform:scaleX(0.977);transform-origin:right top;">115</div><div class="t" style="left:222.5px;width:120px;text-align:right;top:463.10px;font-size:17.6px;line-height:17.6px;color:#2a2ae6;font-weight:normal;transform:scaleX(0.977);transform-origin:right top;">1,350,000</div><div class="t" style="left:222.5px;width:120px;text-align:right;top:505.80px;font-size:17.6px;line-height:17.6px;color:#2a2ae6;font-weight:normal;transform:scaleX(0.977);transform-origin:right top;">30</div><div class="t" style="left:75.6px;top:554.20px;font-size:17.6px;line-height:17.6px;color:#ff0000;font-weight:bold;transform:scaleX(0.9745);transform-origin:left top;">Complete the following analysis. Do not hard code values in your answers. All answers should</div><div class="t" style="left:75.6px;top:573.60px;font-size:17.6px;line-height:17.6px;color:#ff0000;font-weight:bold;transform:scaleX(0.9745);transform-origin:left top;">be positive values.</div><div class="r" style="left:208px;top:631px;width:148px;height:28px;background:#ff0000;"></div><div class="r" style="left:210px;top:633px;width:143px;height:23px;background:#217346;"></div><div class="r" style="left:211px;top:634px;width:141px;height:21px;background:#fffb98;"></div><div class="r" style="left:350px;top:653px;width:4px;height:4px;background:#fff;"></div><div class="r" style="left:351px;top:654px;width:3px;height:3px;background:#217346;"></div><div class="r" style="left:34px;top:753px;width:853px;height:21px;background:#f3f3f3;"></div><div class="r" style="left:34px;top:753px;width:853px;height:1px;background:#b4b4b4;"></div><div class="r" style="left:147px;top:753px;width:76px;height:21px;background:#fff;"></div><div class="r" style="left:222px;top:753px;width:1px;height:21px;background:#c6c6c6;"></div><div class="r" style="left:146px;top:753px;width:1px;height:21px;background:#c6c6c6;"></div><svg style="left:64px;top:764px" width="7" height="8" viewBox="0 0 7 8"><path d="M6.5 0.3 V7.7 L0.6 4 Z" fill="#217346"/></svg><svg style="left:97px;top:764px" width="7" height="8" viewBox="0 0 7 8"><path d="M0.5 0.3 V7.7 L6.4 4 Z" fill="#217346"/></svg><div class="r" style="left:125px;top:769.5px;width:2.6px;height:2.6px;background:#217346;"></div><div class="r" style="left:129.5px;top:769.5px;width:2.6px;height:2.6px;background:#217346;"></div><div class="r" style="left:134px;top:769.5px;width:2.6px;height:2.6px;background:#217346;"></div><div class="r" style="left:233px;top:769.5px;width:2.6px;height:2.6px;background:#217346;"></div><div class="r" style="left:237.5px;top:769.5px;width:2.6px;height:2.6px;background:#217346;"></div><div class="r" style="left:242px;top:769.5px;width:2.6px;height:2.6px;background:#217346;"></div><svg style="left:259px;top:759px" width="19" height="18" viewBox="0 0 19 18"><circle cx="9.4" cy="8.8" r="7.6" fill="none" stroke="#777" stroke-width="1.3"/><path d="M9.4 4.6 V13 M5.2 8.8 H13.6" stroke="#666" stroke-width="2"/></svg><div class="t" style="left:160.0px;top:757.18px;font-size:15.5px;line-height:15.5px;color:#217346;font-weight:bold;transform:scaleX(1.0923365762075439);transform-origin:left top;font-family:'Liberation Serif',serif;">Sheet1</div><div class="r" style="left:866px;top:218px;width:21px;height:535px;background:#e8e8e8;"></div><div class="r" style="left:866px;top:218px;width:2px;height:535px;background:#fff;"></div><div class="r" style="left:868px;top:219px;width:19px;height:18px;background:#e6e6e6;border:1px solid #c6c6c6;box-sizing:border-box;"></div><div class="r" style="left:868px;top:238px;width:19px;height:436px;background:#fff;border:1px solid #ababab;box-sizing:border-box;"></div><div class="r" style="left:868px;top:735px;width:19px;height:18px;background:#e6e6e6;border:1px solid #c6c6c6;box-sizing:border-box;"></div><svg style="left:873px;top:224px" width="10" height="6"><path d="M0.5 5.5 L4.5 1 L8.5 5.5 Z" fill="#777"/></svg><svg style="left:873px;top:741px" width="10" height="6"><path d="M0.5 0.5 L4.5 5 L8.5 0.5 Z" fill="#777"/></svg><div class="r" style="left:545px;top:759px;width:321px;height:15px;background:#e6e6e6;"></div><div class="r" style="left:545px;top:759px;width:18px;height:15px;background:#e6e6e6;border:1px solid #c6c6c6;border-bottom:none;box-sizing:border-box;"></div><div class="r" style="left:563px;top:759px;width:206px;height:15px;background:#fff;border:1px solid #ababab;border-bottom:none;box-sizing:border-box;"></div><div class="r" style="left:848px;top:759px;width:18px;height:15px;background:#e6e6e6;border:1px solid #c6c6c6;border-bottom:none;box-sizing:border-box;"></div><svg style="left:550px;top:765px" width="6" height="8" viewBox="0 0 6 8"><path d="M5 0.4 V7.4 L0.8 3.9 Z" fill="#777"/></svg><svg style="left:854px;top:765px" width="6" height="8" viewBox="0 0 6 8"><path d="M0.8 0.4 V7.4 L5 3.9 Z" fill="#777"/></svg>
</body></html>
